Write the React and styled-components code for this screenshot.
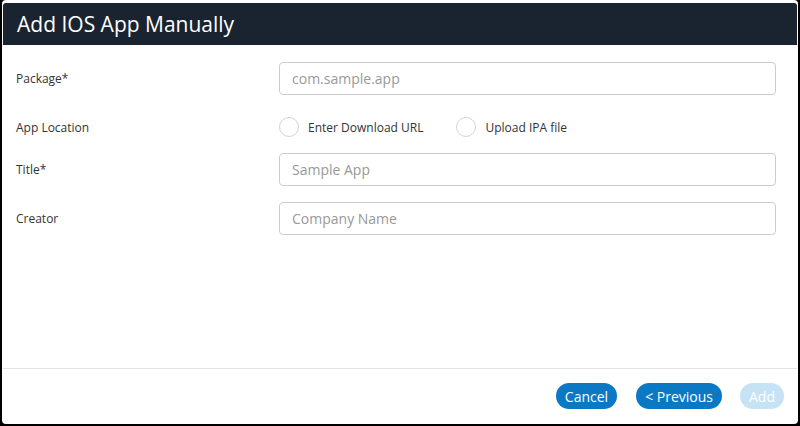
import React from "react";
import styled, { createGlobalStyle } from "styled-components";

const Global = createGlobalStyle`
  html, body { margin: 0; padding: 0; background: #000; }
  body { font-family: "Open Sans", "Liberation Sans", sans-serif; }
  * { box-sizing: border-box; }
`;

const Dialog = styled.div`
  margin: 0 2px 0 2px;
  height: 424px;
  background: #fff;
  border-radius: 4px;
  padding: 3px 1px 1px 1px;
  display: flex;
  flex-direction: column;
`;

const Header = styled.div`
  height: 42px;
  background: #1a2330;
  border-radius: 3px 3px 0 0;
  display: flex;
  align-items: center;
  padding-left: 14px;
  color: #fff;
  font-size: 21px;
  flex-shrink: 0;
`;

const Body = styled.div`
  flex: 1;
  padding: 17px 21px 0 13px;
  display: flex;
  flex-direction: column;
`;

const Row = styled.div`
  display: grid;
  grid-template-columns: 263px 1fr;
  align-items: center;
  margin-bottom: ${(p) => p.$mb || 16}px;
  margin-top: ${(p) => p.$mt || 0}px;
  height: ${(p) => p.$h || 33}px;
`;

const Label = styled.div`
  font-size: 12px;
  color: #333;
`;

const Input = styled.input`
  height: 33px;
  width: 100%;
  border: 1px solid #cccccc;
  border-radius: 4px;
  padding: 0 12px;
  font-family: inherit;
  font-size: 14px;
  color: #333;
  outline: none;
  &::placeholder { color: #999; }
`;

const Radios = styled.div`
  display: flex;
  align-items: center;
`;

const RadioItem = styled.label`
  display: flex;
  align-items: center;
  gap: 9px;
  font-size: 12px;
  color: #333;
  margin-right: 33px;
`;

const Circle = styled.span`
  width: 20px;
  height: 20px;
  border-radius: 50%;
  border: 1px solid #d4d4d4;
  background: #fff;
  display: inline-block;
`;

const Footer = styled.div`
  height: 55px;
  flex-shrink: 0;
  border-top: 1px solid #e3e3e3;
  display: flex;
  align-items: center;
  justify-content: flex-end;
  gap: 18px;
  padding: 1px 13px 1px 0;
`;

const Button = styled.button`
  height: 26px;
  border: none;
  border-radius: 13px;
  padding: 0 9px;
  margin-right: ${(p) => p.$mr || 0}px;
  font-family: inherit;
  font-size: 14px;
  color: #fff;
  background: ${(p) => (p.$disabled ? "#c6e3f6" : "#0a78c3")};
  cursor: pointer;
`;

export default function App() {
  return (
    <>
      <Global />
      <Dialog>
        <Header>Add IOS App Manually</Header>
        <Body>
          <Row>
            <Label>Package*</Label>
            <Input placeholder="com.sample.app" />
          </Row>
          <Row $h={20} $mt={6} $mb={16}>
            <Label>App Location</Label>
            <Radios>
              <RadioItem>
                <Circle />
                Enter Download URL
              </RadioItem>
              <RadioItem>
                <Circle />
                Upload IPA file
              </RadioItem>
            </Radios>
          </Row>
          <Row>
            <Label>Title*</Label>
            <Input placeholder="Sample App" />
          </Row>
          <Row>
            <Label>Creator</Label>
            <Input placeholder="Company Name" />
          </Row>
        </Body>
        <Footer>
          <Button $mr={1}>Cancel</Button>
          <Button>&lt; Previous</Button>
          <Button $disabled>Add</Button>
        </Footer>
      </Dialog>
    </>
  );
}
